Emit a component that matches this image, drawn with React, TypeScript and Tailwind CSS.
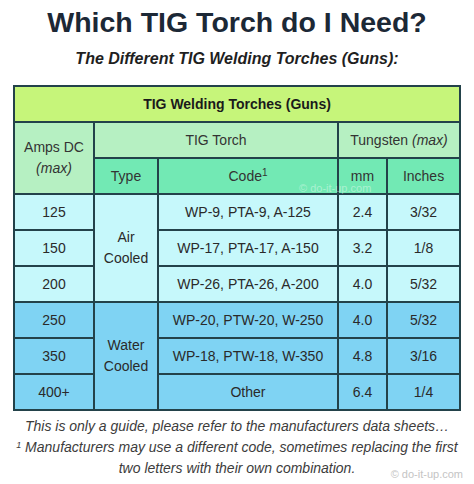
export default function App() {
  const cell = "border-2 border-[#23424a] text-center align-middle p-0";
  const air = "bg-[#c6f8fb]";
  const water = "bg-[#7fd3f3]";

  const rows = [
    { amps: "125", code: "WP-9, PTA-9, A-125", mm: "2.4", inch: "3/32", bg: air },
    { amps: "150", code: "WP-17, PTA-17, A-150", mm: "3.2", inch: "1/8", bg: air },
    { amps: "200", code: "WP-26, PTA-26, A-200", mm: "4.0", inch: "5/32", bg: air },
    { amps: "250", code: "WP-20, PTW-20, W-250", mm: "4.0", inch: "5/32", bg: water },
    { amps: "350", code: "WP-18, PTW-18, W-350", mm: "4.8", inch: "3/16", bg: water },
    { amps: "400+", code: "Other", mm: "6.4", inch: "1/4", bg: water },
  ];

  return (
    <div className="relative w-[474px] h-[484px] bg-white overflow-hidden font-['Liberation_Sans',Arial,sans-serif]">
      <h1 className="pt-[6px] text-center text-[28.5px] leading-[32px] font-bold text-[#1c2836]">
        Which TIG Torch do I Need?
      </h1>
      <h2 className="mt-[11px] text-center text-[16px] leading-[20px] font-bold italic text-[#1f1f1f]">
        The Different TIG Welding Torches (Guns):
      </h2>

      <div className="relative mt-[16px] ml-[13px]">
        <table className="border-collapse table-fixed w-[446px] text-[14px] leading-[21px] text-[#2a2a2a]">
          <colgroup>
            <col className="w-[80px]" />
            <col className="w-[64px]" />
            <col className="w-[180px]" />
            <col className="w-[49px]" />
            <col className="w-[73px]" />
          </colgroup>
          <tbody>
            <tr className="h-[36px]">
              <td colSpan={5} className={`${cell} border-[#4b5b3c] bg-[#c6f57a] font-bold text-[#1a1a1a]`}>
                TIG Welding Torches (Guns)
              </td>
            </tr>
            <tr className="h-[36px]">
              <td rowSpan={2} className={`${cell} bg-[#b6f0c2] text-[#333]`}>
                Amps DC
                <br />
                <i>(max)</i>
              </td>
              <td colSpan={2} className={`${cell} bg-[#b6f0c2] text-[#333]`}>
                TIG Torch
              </td>
              <td colSpan={2} className={`${cell} bg-[#b6f0c2] text-[#333]`}>
                Tungsten <i>(max)</i>
              </td>
            </tr>
            <tr className="h-[36px]">
              <td className={`${cell} bg-[#72e9b4] text-[#333]`}>Type</td>
              <td className={`${cell} bg-[#72e9b4] text-[#333]`}>
                Code<sup className="text-[10px]">1</sup>
              </td>
              <td className={`${cell} bg-[#72e9b4] text-[#333]`}>mm</td>
              <td className={`${cell} bg-[#72e9b4] text-[#333]`}>Inches</td>
            </tr>
            {rows.map((r, i) => (
              <tr key={r.amps} className="h-[36px]">
                <td className={`${cell} ${r.bg}`}>{r.amps}</td>
                {i === 0 && (
                  <td rowSpan={3} className={`${cell} ${air}`}>
                    Air
                    <br />
                    Cooled
                  </td>
                )}
                {i === 3 && (
                  <td rowSpan={3} className={`${cell} ${water}`}>
                    Water
                    <br />
                    Cooled
                  </td>
                )}
                <td className={`${cell} ${r.bg}`}>{r.code}</td>
                <td className={`${cell} ${r.bg}`}>{r.mm}</td>
                <td className={`${cell} ${r.bg}`}>{r.inch}</td>
              </tr>
            ))}
          </tbody>
        </table>
        <span className="absolute left-[286px] top-[95px] text-[11px] text-white/40 pointer-events-none">
          © do-it-up.com
        </span>
      </div>

      <div className="mt-[5px] text-center text-[14px] leading-[21px] italic text-[#3c3c3c]">
        <p>This is only a guide, please refer to the manufacturers data sheets…</p>
        <p>
          <sup className="text-[9px]">1</sup> Manufacturers may use a different code, sometimes replacing the first
          <br />
          two letters with their own combination.
        </p>
      </div>

      <span className="absolute right-[11px] bottom-[4px] text-[11px] leading-none text-[#c4c4c4]">© do-it-up.com</span>
    </div>
  );
}
